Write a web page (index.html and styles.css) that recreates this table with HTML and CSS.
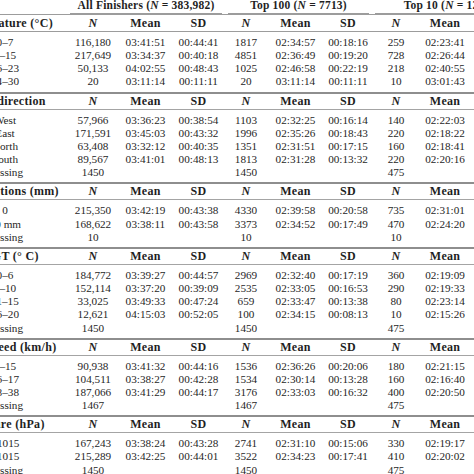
FILE: index.html
```html
<!DOCTYPE html>
<html lang="en">
<head>
<meta charset="utf-8">
<title>Finish times by weather conditions</title>
<link rel="stylesheet" href="styles.css">
</head>
<body>
<div class="frame">
<table class="results">
  <colgroup>
    <col class="c-label"><col class="c-n1"><col class="c-m1"><col class="c-s1">
    <col class="c-n2"><col class="c-m2"><col class="c-s2">
    <col class="c-n3"><col class="c-m3"><col class="c-s3">
  </colgroup>
  <thead>
    <tr class="groups">
      <th></th>
      <th colspan="3" class="grp">All Finishers (<i>N</i> = 383,982)</th>
      <th colspan="3" class="grp">Top 100 (<i>N</i> = 7713)</th>
      <th colspan="3" class="grp">Top 10 (<i>N</i> = 1215)</th>
    </tr>
  </thead>
  <tbody>
    <tr class="colhead"><th>Temperature (°C)</th><th><i>N</i></th><th>Mean</th><th>SD</th><th><i>N</i></th><th>Mean</th><th>SD</th><th><i>N</i></th><th>Mean</th><th>SD</th></tr>
    <tr class="f"><td>0–7</td><td>116,180</td><td>03:41:51</td><td>00:44:41</td><td>1817</td><td>02:34:57</td><td>00:18:16</td><td>259</td><td>02:23:41</td><td></td></tr>
    <tr><td>8–15</td><td>217,649</td><td>03:34:37</td><td>00:40:18</td><td>4851</td><td>02:36:49</td><td>00:19:20</td><td>728</td><td>02:26:44</td><td></td></tr>
    <tr><td>16–23</td><td>50,133</td><td>04:02:55</td><td>00:48:43</td><td>1025</td><td>02:46:58</td><td>00:22:19</td><td>218</td><td>02:40:55</td><td></td></tr>
    <tr class="l"><td>24–30</td><td>20</td><td>03:11:14</td><td>00:11:11</td><td>20</td><td>03:11:14</td><td>00:11:11</td><td>10</td><td>03:01:43</td><td></td></tr>

    <tr class="sec"><th>Wind direction</th><th><i>N</i></th><th>Mean</th><th>SD</th><th><i>N</i></th><th>Mean</th><th>SD</th><th><i>N</i></th><th>Mean</th><th>SD</th></tr>
    <tr class="f"><td>West</td><td>57,966</td><td>03:36:23</td><td>00:38:54</td><td>1103</td><td>02:32:25</td><td>00:16:14</td><td>140</td><td>02:22:03</td><td></td></tr>
    <tr><td>East</td><td>171,591</td><td>03:45:03</td><td>00:43:32</td><td>1996</td><td>02:35:26</td><td>00:18:43</td><td>220</td><td>02:18:22</td><td></td></tr>
    <tr><td>North</td><td>63,408</td><td>03:32:12</td><td>00:40:35</td><td>1351</td><td>02:31:51</td><td>00:17:15</td><td>160</td><td>02:18:41</td><td></td></tr>
    <tr><td>South</td><td>89,567</td><td>03:41:01</td><td>00:48:13</td><td>1813</td><td>02:31:28</td><td>00:13:32</td><td>220</td><td>02:20:16</td><td></td></tr>
    <tr class="l"><td>Missing</td><td>1450</td><td></td><td></td><td>1450</td><td></td><td></td><td>475</td><td></td><td></td></tr>

    <tr class="sec"><th>Precipitations (mm)</th><th><i>N</i></th><th>Mean</th><th>SD</th><th><i>N</i></th><th>Mean</th><th>SD</th><th><i>N</i></th><th>Mean</th><th>SD</th></tr>
    <tr class="f"><td>0</td><td>215,350</td><td>03:42:19</td><td>00:43:38</td><td>4330</td><td>02:39:58</td><td>00:20:58</td><td>735</td><td>02:31:01</td><td></td></tr>
    <tr><td>&gt;0 mm</td><td>168,622</td><td>03:38:11</td><td>00:43:58</td><td>3373</td><td>02:34:52</td><td>00:17:49</td><td>470</td><td>02:24:20</td><td></td></tr>
    <tr class="l"><td>Missing</td><td>10</td><td></td><td></td><td>10</td><td></td><td></td><td>10</td><td></td><td></td></tr>

    <tr class="sec"><th>WBGT (° C)</th><th><i>N</i></th><th>Mean</th><th>SD</th><th><i>N</i></th><th>Mean</th><th>SD</th><th><i>N</i></th><th>Mean</th><th>SD</th></tr>
    <tr class="f"><td>0–6</td><td>184,772</td><td>03:39:27</td><td>00:44:57</td><td>2969</td><td>02:32:40</td><td>00:17:19</td><td>360</td><td>02:19:09</td><td></td></tr>
    <tr><td>7–10</td><td>152,114</td><td>03:37:20</td><td>00:39:09</td><td>2535</td><td>02:33:05</td><td>00:16:53</td><td>290</td><td>02:19:33</td><td></td></tr>
    <tr><td>11–15</td><td>33,025</td><td>03:49:33</td><td>00:47:24</td><td>659</td><td>02:33:47</td><td>00:13:38</td><td>80</td><td>02:23:14</td><td></td></tr>
    <tr><td>16–20</td><td>12,621</td><td>04:15:03</td><td>00:52:05</td><td>100</td><td>02:34:15</td><td>00:08:13</td><td>10</td><td>02:15:26</td><td></td></tr>
    <tr class="l"><td>Missing</td><td>1450</td><td></td><td></td><td>1450</td><td></td><td></td><td>475</td><td></td><td></td></tr>

    <tr class="sec"><th>Wind speed (km/h)</th><th><i>N</i></th><th>Mean</th><th>SD</th><th><i>N</i></th><th>Mean</th><th>SD</th><th><i>N</i></th><th>Mean</th><th>SD</th></tr>
    <tr class="f"><td>0–15</td><td>90,938</td><td>03:41:32</td><td>00:44:16</td><td>1536</td><td>02:36:26</td><td>00:20:06</td><td>180</td><td>02:21:15</td><td></td></tr>
    <tr><td>16–17</td><td>104,511</td><td>03:38:27</td><td>00:42:28</td><td>1534</td><td>02:30:14</td><td>00:13:28</td><td>160</td><td>02:16:40</td><td></td></tr>
    <tr><td>18–38</td><td>187,066</td><td>03:41:29</td><td>00:44:17</td><td>3176</td><td>02:33:03</td><td>00:16:32</td><td>400</td><td>02:20:50</td><td></td></tr>
    <tr class="l"><td>Missing</td><td>1467</td><td></td><td></td><td>1467</td><td></td><td></td><td>475</td><td></td><td></td></tr>

    <tr class="sec"><th>Pressure (hPa)</th><th><i>N</i></th><th>Mean</th><th>SD</th><th><i>N</i></th><th>Mean</th><th>SD</th><th><i>N</i></th><th>Mean</th><th>SD</th></tr>
    <tr class="f"><td>&lt;1015</td><td>167,243</td><td>03:38:24</td><td>00:43:28</td><td>2741</td><td>02:31:10</td><td>00:15:06</td><td>330</td><td>02:19:17</td><td></td></tr>
    <tr><td>≥1015</td><td>215,289</td><td>03:42:25</td><td>00:44:01</td><td>3522</td><td>02:34:23</td><td>00:17:41</td><td>410</td><td>02:20:02</td><td></td></tr>
    <tr class="l"><td>Missing</td><td>1450</td><td></td><td></td><td>1450</td><td></td><td></td><td>475</td><td></td><td></td></tr>
  </tbody>
</table>
</div>
</body>
</html>
```
FILE: styles.css
```css
html, body {
  margin: 0;
  padding: 0;
  background: #ffffff;
}

.frame {
  width: 474px;
  height: 474px;
  overflow: hidden;
}

.results {
  border-collapse: separate;
  border-spacing: 0;
  table-layout: fixed;
  width: 579px;
  margin-left: -53px;
  margin-top: -4px;
  font-family: "Liberation Serif", "Times New Roman", serif;
  font-size: 11.2px;
  color: #262626;
}

.c-label { width: 120px; }
.c-n1 { width: 52px; }
.c-m1 { width: 53px; }
.c-s1 { width: 53px; }
.c-n2 { width: 42px; }
.c-m2 { width: 57px; }
.c-s2 { width: 48px; }
.c-n3 { width: 48px; }
.c-m3 { width: 50px; }
.c-s3 { width: 56px; }

.results th,
.results td {
  padding: 0;
  text-align: center;
  white-space: nowrap;
  vertical-align: middle;
}

.results th {
  font-weight: bold;
  font-size: 12px;
  color: #1f1f1f;
  letter-spacing: 0.3px;
}

.results tbody th:first-child,
.results td:first-child {
  padding-right: 4px;
}

.results td {
  line-height: 13.15px;
}

.groups th {
  line-height: 18px;
  font-size: 11.5px;
  letter-spacing: 0.2px;
}

.groups .grp {
  background-image: linear-gradient(#9c9c9c, #9c9c9c);
  background-repeat: no-repeat;
  background-position: center bottom;
  background-size: calc(100% - 6px) 1px;
}

.colhead th {
  line-height: 16px;
  border-top: 1px solid #9c9c9c;
  border-bottom: 1px solid #9c9c9c;
}

.sec th {
  line-height: 15px;
  border-top: 2px solid #8e8e8e;
  border-bottom: 1px solid #a4a4a4;
}

tr.f td {
  padding-top: 4px;
}

tr.l td {
  padding-bottom: 3px;
}
```
